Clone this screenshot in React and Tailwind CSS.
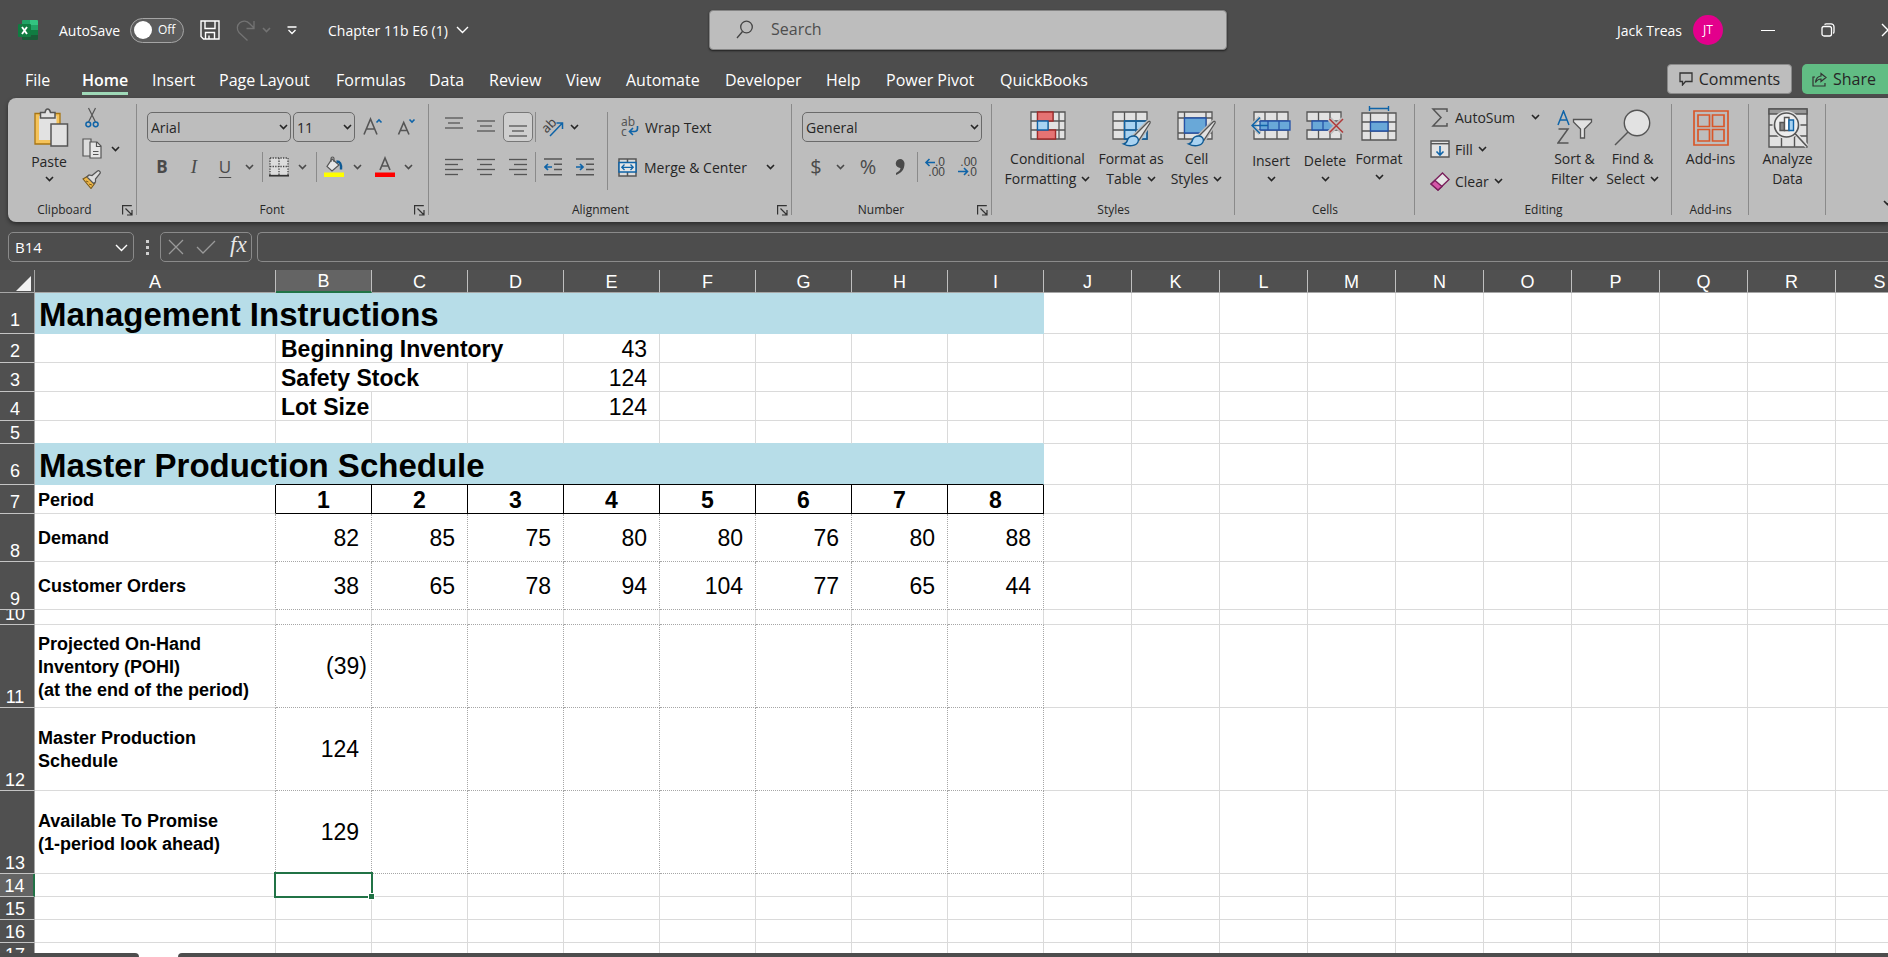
import React from "react";
import clsx from "clsx";

const tabs = [
  { name: "File", width: "w-[57px]" },
  { name: "Home", width: "w-[70px]", active: true },
  { name: "Insert", width: "w-[67px]" },
  { name: "Page Layout", width: "w-[117px]" },
  { name: "Formulas", width: "w-[93px]" },
  { name: "Data", width: "w-[60px]" },
  { name: "Review", width: "w-[77px]" },
  { name: "View", width: "w-[60px]" },
  { name: "Automate", width: "w-[99px]" },
  { name: "Developer", width: "w-[101px]" },
  { name: "Help", width: "w-[60px]" },
  { name: "Power Pivot", width: "w-[114px]" },
  { name: "QuickBooks", width: "w-[100px]" },
];

const columns = "ABCDEFGHIJKLMNOPQRS".split("").map((name, i) => ({
  name,
  width: i === 0 ? 241 : i < 9 ? 96 : 88,
}));

const rows = [
  { height: 41, title: "Management Instructions" },
  { height: 29, param: "Beginning Inventory", span: 3, value: "43" },
  { height: 29, param: "Safety Stock", span: 2, value: "124" },
  { height: 29, param: "Lot Size", span: 1, value: "124" },
  { height: 23, aboveTitle: true },
  { height: 41, title: "Master Production Schedule", underline: true },
  { height: 29, label: ["Period"], periods: ["1", "2", "3", "4", "5", "6", "7", "8"] },
  { height: 48, label: ["Demand"], dotted: true, values: ["82", "85", "75", "80", "80", "76", "80", "88"] },
  { height: 48, label: ["Customer Orders"], dotted: true, values: ["38", "65", "78", "94", "104", "77", "65", "44"] },
  { height: 15, dottedBottom: true },
  {
    height: 83,
    label: ["Projected On-Hand", "Inventory (POHI)", "(at the end of the period)"],
    dotted: true,
    values: ["(39)"],
  },
  { height: 83, label: ["Master Production", "Schedule"], dotted: true, values: ["124"] },
  { height: 83, label: ["Available To Promise", "(1-period look ahead)"], dotted: true, values: ["129"] },
  { height: 23, selected: true },
  { height: 23 },
  { height: 23 },
  { height: 23 },
];

/* ---------- small pieces ---------- */

const Chevron = ({ className = "" }) => (
  <svg width="9" height="6" viewBox="0 0 9 6" fill="none" stroke="currentColor" strokeWidth="1.6" className={clsx("shrink-0", className)}>
    <path d="M1 1l3.5 3.5L8 1" />
  </svg>
);

const WideChevron = ({ className = "" }) => (
  <svg width="13" height="8" viewBox="0 0 13 8" fill="none" stroke="currentColor" strokeWidth="1.4" className={clsx("shrink-0", className)}>
    <path d="M1 1l5.5 5.5L12 1" />
  </svg>
);

const MenuButton = ({ label, className = "" }) => (
  <button type="button" aria-label={label} className={clsx("flex h-[30px] items-center justify-center", className)}>
    <Chevron />
  </button>
);

const IconButton = ({ label, className = "w-8", children }) => (
  <button type="button" aria-label={label} className={clsx("flex h-[30px] shrink-0 items-center justify-center", className)}>
    {children}
  </button>
);

const Divider = () => <div className="h-[30px] w-px shrink-0 bg-[#8a8a8a]" />;

const Picker = ({ label, options, className = "" }) => (
  <div className={clsx("relative h-[30px]", className)}>
    <select
      aria-label={label}
      className="h-full w-full appearance-none rounded-[5px] border border-[#6a6a6a] bg-transparent pl-[3px] text-[14px] text-[#262626] outline-none"
    >
      {options.map((option) => (
        <option key={option}>{option}</option>
      ))}
    </select>
    <Chevron className="pointer-events-none absolute top-3 right-[3px]" />
  </div>
);

const Group = ({ name, launcher, className = "", children }) => (
  <section className={clsx("relative flex h-[124px] shrink-0 flex-col", className)}>
    <div className="h-[102px]">{children}</div>
    <div className="flex h-5 items-center justify-center text-[12px]">{name}</div>
    {launcher && (
      <button type="button" aria-label={`${name} settings`} className="absolute right-[4px] bottom-[6px]">
        <svg width="11" height="11" viewBox="0 0 11 11" fill="none" stroke="#333" strokeWidth="1.2">
          <path d="M.6 9.5V.6h9.2M3.5 3.5l6 6M10 5v5H5" />
        </svg>
      </button>
    )}
    <div className="absolute top-[6px] right-0 h-[111px] w-px bg-[#8a8a8a]" />
  </section>
);

const BigButton = ({ lines, icon, menu, low, className = "" }) => (
  <button type="button" className={clsx("flex shrink-0 flex-col items-center pt-[8px] text-[14px] leading-5", className)}>
    <span className="flex h-[43px] items-center justify-center">{icon}</span>
    <span className={clsx("whitespace-nowrap", low && "pt-[2px]")}>{lines[0]}</span>
    <span className={clsx("flex h-5 gap-[5px] whitespace-nowrap", lines[1] ? "items-center" : "pt-[5px]")}>
      {lines[1]}
      {menu && <Chevron />}
    </span>
  </button>
);

/* ---------- icons ---------- */

const ExcelLogo = () => (
  <svg width="20" height="20" viewBox="0 0 20 20">
    <path d="M4 1a1 1 0 011-1h7v5H4z" fill="#21a366" />
    <path d="M12 0h7a1 1 0 011 1v4h-8z" fill="#33c481" />
    <path d="M4 5h8v5H4z" fill="#107c41" />
    <path d="M12 5h8v5h-8z" fill="#21a366" />
    <path d="M4 10h8v5H4z" fill="#185c37" />
    <path d="M12 10h8v5h-8z" fill="#107c41" />
    <path d="M4 15h16v4a1 1 0 01-1 1H5a1 1 0 01-1-1z" fill="#185c37" />
    <rect y="4" width="13" height="13" rx="1" fill="#107c41" />
    <path d="M4 7l5 7M9 7l-5 7" stroke="#fff" strokeWidth="1.9" />
  </svg>
);

const SaveIcon = () => (
  <svg width="20" height="20" viewBox="0 0 20 20" fill="none" stroke="#fff" strokeWidth="1.4">
    <path d="M1 1h18v18H3.5L1 16.5z" />
    <path d="M5 1v7.5h10V1M5.5 19v-6.5h9V19M9 15.5V19" />
  </svg>
);

const RedoIcon = () => (
  <svg width="20" height="21" viewBox="0 0 20 21" fill="none" stroke="#737373" strokeWidth="1.3">
    <path d="M18 1v7.5h-7.500M18 8L13.500 3.500A6.500 6.500 0 003 12.500l8.500 8" />
  </svg>
);

const PasteIcon = () => (
  <svg width="36" height="40" viewBox="0 0 36 40" className="ml-[3px]">
    <path d="M2 5.500h25V36H2z" fill="#f5c35a" stroke="#a87512" strokeWidth="1.3" />
    <path d="M6 8h17.500v24H6z" fill="#e2e2e2" />
    <path d="M7.500 10V4.500h4.500C12.500 2 13 1 14.500 1S17 2 17.500 4.500H22V10z" fill="#e2e2e2" stroke="#555" strokeWidth="1.5" />
    <path d="M18 16h16.500v22H18z" fill="#e2e2e2" stroke="#555" strokeWidth="1.5" />
  </svg>
);

const CutIcon = () => (
  <svg width="14" height="21" viewBox="0 0 14 21" fill="none">
    <path d="M3.500 1l7 14M10.500 1l-7 14" stroke="#555" strokeWidth="1.2" />
    <circle cx="3.300" cy="17.300" r="2.400" stroke="#0f64a8" strokeWidth="1.5" />
    <circle cx="10.700" cy="17.300" r="2.400" stroke="#0f64a8" strokeWidth="1.5" />
  </svg>
);

const CopyIcon = () => (
  <svg width="20" height="21" viewBox="0 0 20 21" fill="none" stroke="#555" strokeWidth="1.2">
    <path d="M1 1h8v17H1z" fill="#dcdcdc" />
    <path d="M8 4h7l4 4v12H8z" fill="#e6e6e6" />
    <path d="M14.500 4v4.500H19M11 13.500h5.500M11 16.500h5.500" />
  </svg>
);

const BrushIcon = () => (
  <svg width="20" height="19" viewBox="0 0 20 19">
    <path d="M1 9l5-3 7 7-4 5.500z" fill="#f0b94a" stroke="#7a5a1a" strokeWidth="1.1" />
    <path d="M5 7l2-2 3 .5L15.500 1c1.500-1 3.500 1 2.500 2.500L13.500 9v3l-2 1.500z" fill="#dcdcdc" stroke="#555" strokeWidth="1.2" />
    <path d="M4 11l2.500 1M7 14l3 1" stroke="#7a5a1a" />
  </svg>
);

const FontSizeIcon = ({ up }) => (
  <svg width="20" height="20" viewBox="0 0 20 20" fill="none">
    {up ? (
      <>
        <path d="M1 17.500L7.500 2l6.500 15.500M3.300 12h8.400" stroke="#555" strokeWidth="1.6" />
        <path d="M13.500 5.500L16 3l2.500 2.500" stroke="#0f64a8" strokeWidth="1.6" />
      </>
    ) : (
      <>
        <path d="M1.500 17.500L6.700 5.500 12 17.500M3.400 13.500h6.600" stroke="#555" strokeWidth="1.6" />
        <path d="M12.500 2.500L15 5l2.500-2.500" stroke="#0f64a8" strokeWidth="1.6" />
      </>
    )}
  </svg>
);

const BordersIcon = () => (
  <svg width="20" height="20" viewBox="0 0 20 20" fill="none">
    <path d="M1 1h18v17H1z" fill="#dcdcdc" />
    <path d="M1 1h18M1 9.500h18M1 1v17M10 1v17M19 1v17" stroke="#444" strokeWidth="1.3" strokeDasharray="1.300 1.300" />
    <path d="M0 18.700h20" stroke="#333" strokeWidth="1.7" />
  </svg>
);

const FillColorIcon = () => (
  <svg width="20" height="22" viewBox="0 0 20 22">
    <path d="M8 3l7 6-7 6-5-4.500z" fill="#e6e6e6" stroke="#555" strokeWidth="1.2" />
    <path d="M7 6V2.500C7 .5 10 .5 10 2.500V6" fill="none" stroke="#555" strokeWidth="1.100" />
    <path d="M12.500 5.500c3.500 0 5 2 4.500 8" fill="none" stroke="#0f5a94" strokeWidth="2.400" />
    <path d="M0 16.500h20v4.500H0z" fill="#ffff00" />
  </svg>
);

const FontColorIcon = () => (
  <svg width="20" height="22" viewBox="0 0 20 22">
    <path d="M5 14L10 2l5 12M6.700 10h6.600" fill="none" stroke="#555" strokeWidth="1.6" />
    <path d="M0 16.500h20v4.500H0z" fill="#ff0000" />
  </svg>
);

// each entry is [inset, y]
const LinesIcon = ({ lines, align = "center" }) => (
  <svg width="18" height="20" viewBox="0 0 18 20" stroke="#555" strokeWidth="1.3">
    {lines.map(([inset, y]) => (
      <path key={y} d={`M${align === "left" ? 0 : inset} ${y}H${align === "right" ? 18 : 18 - inset}`} />
    ))}
  </svg>
);

const paragraph = [[0, 2.5], [3, 7.5], [0, 12.5], [3, 17.5]];
const paragraphSide = [[0, 2.5], [5, 7.5], [0, 12.5], [5, 17.5]];

const OrientationIcon = () => (
  <svg width="21" height="20" viewBox="0 0 21 20" fill="none" className="overflow-visible">
    <text x="2" y="15" transform="rotate(-45 5 14)" fontSize="13" fill="#444" className="font-['Noto_Sans',sans-serif]">
      ab
    </text>
    <path d="M7 19L19 6.500M13.500 6H19.500v6" stroke="#0f64a8" strokeWidth="1.5" />
  </svg>
);

const IndentIcon = ({ out }) => (
  <svg width="18" height="18" viewBox="0 0 18 18" fill="none" strokeWidth="1.4">
    <path d="M0 1h18M10 6.300h8M10 11.500h8M0 16.700h18" stroke="#555" />
    <path d={out ? "M8 9H1M4 6L1 9l3 3" : "M0 9h7M4 6l3 3-3 3"} stroke="#0f64a8" strokeWidth="1.7" />
  </svg>
);

const WrapIcon = () => (
  <svg width="18" height="20" viewBox="0 0 18 20" fill="none" className="overflow-visible">
    <text x="0" y="9" fontSize="12" fill="#555" className="font-['Noto_Sans',sans-serif]">ab</text>
    <text x="0" y="19" fontSize="12" fill="#555" className="font-['Noto_Sans',sans-serif]">c</text>
    <path d="M16.500 9v2.500a3 3 0 01-3 3H8.500M12 11l-3.500 3.500L12 18" stroke="#0f64a8" strokeWidth="1.6" />
  </svg>
);

const MergeIcon = () => (
  <svg width="19" height="19" viewBox="0 0 19 19" fill="none">
    <path d="M1 1h17v17H1zM9.500 1v17" fill="#dcdcdc" stroke="#555" strokeWidth="1.5" />
    <path d="M1 4.500h17v9.500H1z" fill="#e6e6e6" stroke="#0f64a8" strokeWidth="1.5" />
    <path d="M4 9.300h11M6.500 6.500L3.800 9.300l2.700 2.700M12.500 6.500l2.700 2.800-2.700 2.700" stroke="#0f64a8" strokeWidth="1.3" />
  </svg>
);

const DecimalIcon = ({ increase }) => (
  <svg width="20" height="20" viewBox="0 0 20 20" fill="none" className="overflow-visible">
    <text x={increase ? 20 : 19} y="8.500" fontSize="12" textAnchor="end" fill="#444" className="font-['Liberation_Sans',sans-serif]">
      {increase ? ".0" : ".00"}
    </text>
    <text x={increase ? 20 : 19} y="19" fontSize="12" textAnchor="end" fill="#444" className="font-['Liberation_Sans',sans-serif]">
      {increase ? ".00" : ".0"}
    </text>
    <path
      d={increase ? "M10 5.500H1M4.500 2L1 5.500 4.500 9" : "M0 14.500h9.500M6 11l3.500 3.500L6 18"}
      stroke="#0f64a8"
      strokeWidth="1.6"
    />
  </svg>
);

const ConditionalIcon = () => (
  <svg width="36" height="29" viewBox="0 0 36 29" fill="none" stroke="#555" strokeWidth="1.300">
    <path d="M1 1h34v27H1z" fill="#e2e2e2" />
    <path d="M1 10h34M1 19h34M7.500 1v27M29 1v27" />
    <path d="M23 1v9M18 10v9M25.500 19v9" />
    <path d="M7.500 1H23v9H7.500zM7.500 19h18v9h-18z" fill="#e57373" stroke="#a02b2b" />
    <path d="M7.500 10H18v9H7.500z" fill="#a9d3f2" stroke="#0f64a8" />
  </svg>
);

const Paintbrush = () => (
  <>
    <path d="M36 11c1-1.300 2.500-.5 2 1L27 29l-5-4z" fill="#e2e2e2" stroke="#bdbdbd" strokeWidth="4" />
    <path d="M36 11c1-1.300 2.500-.5 2 1L27 29l-5-4z" fill="#e2e2e2" stroke="#555" strokeWidth="1.300" />
    <path d="M22 25c3 0 5.500 3 4 6-2 4-9 5-14.500 2 3-.5 3.500-2 4-4 .7-2.500 3-4 6.500-4z" fill="#a9d3f2" stroke="#0f5a94" strokeWidth="1.400" />
  </>
);

const FormatTableIcon = () => (
  <svg width="39" height="36" viewBox="0 0 39 36" fill="none" stroke="#555" strokeWidth="1.300">
    <path d="M1 1h34v27H1z" fill="#e2e2e2" />
    <path d="M12.500 10H35v18H12.500z" fill="#a9d3f2" />
    <path d="M1 10h34M1 19h34M12.500 1v27M24 1v27" />
    <path d="M12.500 10H35v18H12.500zM12.500 19H35M24 10v18" stroke="#0f64a8" />
    <Paintbrush />
  </svg>
);

const CellStylesIcon = () => (
  <svg width="39" height="36" viewBox="0 0 39 36" fill="none" stroke="#555" strokeWidth="1.300">
    <path d="M1 1h34v27H1z" fill="#e2e2e2" />
    <path d="M1 7h34M1 22h34M7.500 1v27M29 1v27" />
    <path d="M7.500 7H29v15H7.500z" fill="#69a8d8" stroke="#2452a8" />
    <Paintbrush />
  </svg>
);

const InsertIcon = () => (
  <svg width="40" height="29" viewBox="0 0 40 29" fill="none" stroke="#555" strokeWidth="1.300">
    <path d="M3 1h34v27H3z" fill="#e2e2e2" />
    <path d="M14 1v27M26 1v27M3 10h34M3 19h34" />
    <path d="M9 10h30v9H9z" fill="#69a8d8" stroke="#2452a8" />
    <path d="M17 10v9M28 10v9" stroke="#2452a8" />
    <path d="M9 6.500l-8 8 8 8" stroke="#bdbdbd" strokeWidth="4" />
    <path d="M17 14.500H1.500M9 6.500l-8 8 8 8" stroke="#0f64a8" strokeWidth="1.500" />
  </svg>
);

const DeleteIcon = () => (
  <svg width="38" height="29" viewBox="0 0 38 29" fill="none" stroke="#555" strokeWidth="1.300">
    <path d="M1 1h34v9H1zM1 19h34v9H1z" fill="#e2e2e2" />
    <path d="M12.500 1v9M24 1v9M12.500 19v9M24 19v9" />
    <path d="M6 10h18l4 4.500-4 4.500H6z" fill="#69a8d8" stroke="#2452a8" />
    <path d="M17 10v9" stroke="#2452a8" />
    <path d="M23.500 8l13.500 13.500M37 8L23.500 21.500" stroke="#bdbdbd" strokeWidth="5" />
    <path d="M23.500 8l13.500 13.500M37 8L23.500 21.500" stroke="#b03a3a" strokeWidth="1.500" />
  </svg>
);

const FormatIcon = () => (
  <svg width="36" height="35" viewBox="0 0 36 35" fill="none" stroke="#555" strokeWidth="1.300">
    <path d="M1 7h34v27H1z" fill="#e2e2e2" />
    <path d="M9.500 7v27M27 7v27M1 16h34M1 25h34" />
    <path d="M9.500 16H27v9H9.500z" fill="#69a8d8" stroke="#2452a8" />
    <path d="M8.500 2.500h19M8.500 0v5M27.500 0v5" stroke="#0f64a8" strokeWidth="1.400" />
  </svg>
);

const SigmaIcon = () => (
  <svg width="20" height="19" viewBox="0 0 20 19" fill="none" stroke="#555" strokeWidth="1.500">
    <path d="M17 4V1H3l8 8.500L3 18h14v-3" />
  </svg>
);

const FillIcon = () => (
  <svg width="20" height="18" viewBox="0 0 20 18" fill="none" stroke="#555" strokeWidth="1.400">
    <path d="M1 1h18v16H1z" fill="#e2e2e2" />
    <path d="M1 3.700h18" />
    <path d="M10 6v9M6.500 11.500L10 15l3.500-3.500" stroke="#0f64a8" strokeWidth="1.600" />
  </svg>
);

const EraserIcon = () => (
  <svg width="20" height="19" viewBox="0 0 20 19" stroke="#7a1f5c" strokeWidth="1.400">
    <path d="M12.500 1L19 7.500 8 18 1 12z" fill="#e6e6e6" />
    <path d="M5 8.500l7 6L8 18l-7-6z" fill="#d557a8" />
  </svg>
);

const SortIcon = () => (
  <svg width="36" height="36" viewBox="0 0 36 36" fill="none" strokeWidth="1.500">
    <path d="M1 15L6.500 1 12 15M3 10h7" stroke="#0f64a8" />
    <path d="M1.500 19h9.500L1 33h10.500" stroke="#555" />
    <path d="M16.500 9.500h18v2.500l-7 7v9h-4v-9l-7-7z" fill="#e2e2e2" stroke="#555" strokeWidth="1.300" />
  </svg>
);

const FindIcon = () => (
  <svg width="37" height="37" viewBox="0 0 37 37" stroke="#555" strokeWidth="1.400">
    <circle cx="23" cy="14" r="12.700" fill="#e2e2e2" />
    <path d="M14 23L1 36" />
  </svg>
);

const AddinsIcon = () => (
  <svg width="36" height="36" viewBox="0 0 36 36" fill="none" stroke="#d8572a" strokeWidth="1.700">
    <path d="M1 1h34v34H1zM5 5h11.500v11.500H5zM19.500 5H31v11.500H19.500zM5 19.500h11.500V31H5zM19.500 19.500H31V31H19.500z" />
  </svg>
);

const AnalyzeIcon = () => (
  <svg width="40" height="40" viewBox="0 0 40 40" fill="none" stroke="#555" strokeWidth="1.400">
    <path d="M1 1h38v38H1z" fill="#e2e2e2" />
    <path d="M1 1h38v5H1z" fill="#999" />
    <path d="M1 17h38M1 28h38M13.500 28v11M26.500 28v11" />
    <circle cx="18.500" cy="17" r="14" fill="#e2e2e2" stroke="none" />
    <path d="M28 26l11 12.500" stroke="#e2e2e2" strokeWidth="4" />
    <circle cx="18.500" cy="17" r="12" fill="#ededed" strokeWidth="1.600" />
    <path d="M27 25.500l12 13" strokeWidth="1.600" />
    <path d="M12 14.500h4.500v8H12z" fill="#888" />
    <path d="M16.500 9.500H21v13h-4.500z" fill="#fff" />
    <path d="M21 12h4.500v10.500H21z" fill="#a9d3f2" stroke="#0f64a8" />
  </svg>
);

/* ---------- window chrome ---------- */

const TitleBar = () => (
  <header className="flex h-[60px] items-center text-[14px] text-white">
    <div className="flex w-[709px] shrink-0 items-center pl-[18px]">
      <ExcelLogo />
      <label htmlFor="autosave" className="box-content w-[71px] pl-[21px] whitespace-nowrap">
        AutoSave
      </label>
      <div className="relative flex h-[25px] w-[54px] items-center rounded-full border border-[#a5a5a5] bg-[#5c5c5c]">
        <input id="autosave" type="checkbox" className="absolute inset-0 h-full w-full appearance-none rounded-full" />
        <span className="ml-[3px] h-[18px] w-[18px] rounded-full bg-white" />
        <span className="ml-[6px] text-[12px]">Off</span>
      </div>
      <button type="button" aria-label="Save" className="ml-4">
        <SaveIcon />
      </button>
      <button type="button" aria-label="Redo" className="ml-4 flex items-center gap-[6px] text-[#737373]">
        <RedoIcon />
        <Chevron />
      </button>
      <button type="button" aria-label="Customize toolbar" className="ml-4">
        <svg width="10" height="9" viewBox="0 0 10 9" fill="none" stroke="#fff" strokeWidth="1.300">
          <path d="M.5 1h9M1.500 4L5 7.500 8.500 4" />
        </svg>
      </button>
      <button type="button" className="ml-[31px] flex items-center gap-2 whitespace-nowrap">
        Chapter 11b E6 (1)
        <WideChevron />
      </button>
    </div>
    <div className="relative h-10 w-[518px]">
      <input
        type="text"
        aria-label="Search"
        placeholder="Search"
        className="h-full w-full rounded-[4px] border border-[#858585] bg-[#bdbdbd] pb-[2px] pl-[61px] text-[16px] text-[#262626] shadow-[0_1px_2px_rgba(0,0,0,0.6)] outline-none placeholder:text-[#4d4d4d]"
      />
      <svg className="absolute top-[10px] left-[27px]" width="18" height="20" viewBox="0 0 18 20" fill="none" stroke="#444" strokeWidth="1.300">
        <circle cx="10.500" cy="7" r="5.800" />
        <path d="M6.500 11.500L1 18" />
      </svg>
    </div>
    <div className="ml-auto flex items-center">
      <span className="whitespace-nowrap">Jack Treas</span>
      <button type="button" className="ml-[11px] h-[30px] w-[30px] rounded-full bg-[#e3008c] text-[12px]">
        JT
      </button>
      <button type="button" aria-label="Minimize" className="ml-[38px] flex h-[30px] w-[14px] items-center">
        <span className="h-px w-full bg-white" />
      </button>
      <button type="button" aria-label="Restore" className="ml-[46px]">
        <svg width="14" height="14" viewBox="0 0 14 14" fill="none" stroke="#fff" strokeWidth="1.300">
          <rect x="1" y="3.500" width="9.500" height="9.500" rx="2" />
          <path d="M3.500 1.500a3 3 0 012-.7H10a3 3 0 013 3v4.700a3 3 0 01-.7 2" />
        </svg>
      </button>
      <button type="button" aria-label="Close" className="-mr-[7px] ml-[46px]">
        <svg width="14" height="14" viewBox="0 0 14 14" fill="none" stroke="#fff" strokeWidth="1.400">
          <path d="M1 1l12 12M13 1L1 13" />
        </svg>
      </button>
    </div>
  </header>
);

const TabBar = () => (
  <nav className="flex h-[38px] items-start pl-[25px] text-[16px] text-white">
    {tabs.map((tab) => (
      <div key={tab.name} className={clsx("shrink-0 pt-[6px]", tab.width)}>
        <a
          href="#"
          className={clsx(
            "inline-block h-[29px] leading-7 whitespace-nowrap",
            tab.active && "border-b-[3px] border-[#9fd9b8] font-semibold"
          )}
        >
          {tab.name}
        </a>
      </div>
    ))}
    <div className="ml-auto flex shrink-0 gap-[10px] pt-1 text-[#262626]">
      <button
        type="button"
        className="flex h-[30px] w-[125px] items-center justify-center gap-[6px] rounded-[4px] border border-[#8a8a8a] bg-[#bdbdbd]"
      >
        <svg width="14" height="14" viewBox="0 0 14 14" fill="none" stroke="#333" strokeWidth="1.300">
          <path d="M1 1h12v8.500H6.500L3.500 13V9.500H1z" />
        </svg>
        Comments
      </button>
      <button type="button" className="flex h-[30px] w-[86px] items-center gap-[6px] rounded-l-[5px] bg-[#61bd84] pl-[10px]">
        <svg width="15" height="15" viewBox="0 0 15 15" fill="none" stroke="#333" strokeWidth="1.200">
          <path d="M3 5H1v9h12v-3" />
          <path d="M9 1.500L14 5.500l-5 4V7C6.500 7 5 8 3.500 10.500 4 6.500 6 4.300 9 4z" />
        </svg>
        Share
      </button>
    </div>
  </nav>
);

const Ribbon = () => (
  <div className="ml-2 flex h-[124px] rounded-l-lg bg-[#bdbdbd] text-[#262626] shadow-[0_2px_4px_rgba(0,0,0,0.45)]">
    <Group name={<span className="pr-4">Clipboard</span>} launcher className="w-[129px]">
      <div className="flex">
        <button type="button" className="ml-[18px] flex w-[46px] flex-col items-center pt-[10px] text-[14px] leading-5">
          <PasteIcon />
          <span className="pt-[4px]">Paste</span>
          <Chevron className="mt-1" />
        </button>
        <div className="flex flex-col pt-[9px] pl-[10px]">
          <button type="button" aria-label="Cut" className="flex h-[31px] w-5 justify-center">
            <CutIcon />
          </button>
          <button type="button" aria-label="Copy" className="flex h-8 items-start gap-[9px]">
            <CopyIcon />
            <Chevron className="mt-2" />
          </button>
          <button type="button" aria-label="Format painter" className="w-5">
            <BrushIcon />
          </button>
        </div>
      </div>
    </Group>

    <Group name={<span className="pr-[22px]">Font</span>} launcher className="w-[292px]">
      <div className="flex gap-[2px] pt-[14px] pl-[10px]">
        <Picker label="Font" options={["Arial", "Calibri"]} className="w-[144px]" />
        <Picker label="Font size" options={["11", "12"]} className="w-[62px]" />
        <IconButton label="Increase font size" className="w-[32px]">
          <FontSizeIcon up />
        </IconButton>
        <IconButton label="Decrease font size" className="w-[32px]">
          <FontSizeIcon />
        </IconButton>
      </div>
      <div className="flex pt-[10px] pl-[9px] text-[17px] text-[#4a4a4a]">
        <IconButton label="Bold">
          <b>B</b>
        </IconButton>
        <IconButton label="Italic">
          <i className="font-['Liberation_Serif',serif] text-[19px]">I</i>
        </IconButton>
        <IconButton label="Underline" className="w-[30px]">
          <u className="underline-offset-4">U</u>
        </IconButton>
        <MenuButton label="Underline styles" className="mr-1 w-[18px]" />
        <Divider />
        <IconButton label="Borders" className="ml-[3px] w-[26px]">
          <BordersIcon />
        </IconButton>
        <MenuButton label="Border styles" className="mr-1 w-[20px]" />
        <Divider />
        <IconButton label="Fill color" className="ml-[3px] w-[28px]">
          <FillColorIcon />
        </IconButton>
        <MenuButton label="Fill colors" className="w-[19px]" />
        <IconButton label="Font color" className="ml-1 w-[28px]">
          <FontColorIcon />
        </IconButton>
        <MenuButton label="Font colors" className="w-[18px]" />
      </div>
    </Group>

    <Group name={<span className="pr-5">Alignment</span>} launcher className="w-[363px]">
      <div className="flex pt-[14px] pl-[9px]">
        <div>
          <div className="flex">
            <IconButton label="Top align">
              <LinesIcon lines={[[0, 1], [3, 6], [0, 11]]} />
            </IconButton>
            <IconButton label="Middle align">
              <LinesIcon lines={[[0, 4], [3, 9], [0, 14]]} />
            </IconButton>
            <IconButton label="Bottom align" className="mr-[2px] ml-px w-[30px] rounded-[5px] border border-[#777] bg-[#cfcfcf]">
              <LinesIcon lines={[[0, 9], [3, 14], [0, 19]]} />
            </IconButton>
            <Divider />
            <IconButton label="Orientation" className="w-[34px]">
              <OrientationIcon />
            </IconButton>
            <MenuButton label="Orientation options" className="w-2" />
          </div>
          <div className="flex pt-[10px]">
            <IconButton label="Align left">
              <LinesIcon lines={paragraphSide} align="left" />
            </IconButton>
            <IconButton label="Center">
              <LinesIcon lines={paragraph} />
            </IconButton>
            <IconButton label="Align right">
              <LinesIcon lines={paragraphSide} align="right" />
            </IconButton>
            <div className="pl-px">
              <Divider />
            </div>
            <IconButton label="Decrease indent" className="ml-px w-8">
              <IndentIcon out />
            </IconButton>
            <IconButton label="Increase indent">
              <IndentIcon />
            </IconButton>
          </div>
        </div>
        <div className="mr-[10px] ml-auto h-[78px] w-px bg-[#8a8a8a]" />
        <div className="w-[174px] text-[14px]">
          <button type="button" className="flex h-[30px] items-center gap-[6px] pl-[3px]">
            <WrapIcon />
            Wrap Text
          </button>
          <div className="flex pt-[10px]">
            <button type="button" className="flex h-[30px] w-[142px] items-center gap-[7px] whitespace-nowrap">
              <MergeIcon />
              Merge &amp; Center
            </button>
            <MenuButton label="Merge options" className="w-[20px]" />
          </div>
        </div>
      </div>
    </Group>

    <Group name={<span className="pr-[22px]">Number</span>} launcher className="w-[200px]">
      <div className="pt-[14px] pl-[10px]">
        <Picker label="Number format" options={["General", "Currency"]} className="w-[180px]" />
      </div>
      <div className="flex pt-[10px] pl-2 text-[20px] text-[#4a4a4a]">
        <IconButton label="Currency">$</IconButton>
        <MenuButton label="Currency formats" className="w-4" />
        <IconButton label="Percent" className="w-[40px]">
          %
        </IconButton>
        <IconButton label="Comma style" className="mr-[5px] w-[24px]">
          <svg width="10" height="16" viewBox="0 0 10 16" fill="#4a4a4a">
            <path d="M5 0a4.500 4.500 0 014.500 4.800C9.500 10.500 6 14.500 1 16V14c3-1.500 4.300-3 4.500-5A4.500 4.500 0 115 0z" />
          </svg>
        </IconButton>
        <Divider />
        <IconButton label="Increase decimal" className="w-[34px]">
          <DecimalIcon increase />
        </IconButton>
        <IconButton label="Decrease decimal" className="w-[31px]">
          <DecimalIcon />
        </IconButton>
      </div>
    </Group>

    <Group name="Styles" className="w-[243px]">
      <div className="flex pl-[10px]">
        <BigButton lines={["Conditional", "Formatting"]} menu icon={<div className="pb-1"><ConditionalIcon /></div>} className="w-[91px]" />
        <BigButton lines={["Format as", "Table"]} menu icon={<div className="pt-[3px]"><FormatTableIcon /></div>} className="w-[76px]" />
        <BigButton lines={["Cell", "Styles"]} menu icon={<div className="pt-[3px]"><CellStylesIcon /></div>} className="w-[55px]" />
      </div>
    </Group>

    <Group name="Cells" className="w-[180px]">
      <div className="flex pl-[9px]">
        <BigButton lines={["Insert"]} menu low icon={<div className="pb-1"><InsertIcon /></div>} className="w-[54px]" />
        <BigButton lines={["Delete"]} menu low icon={<div className="pb-1"><DeleteIcon /></div>} className="w-[54px]" />
        <BigButton lines={["Format"]} menu icon={<div className="pb-2"><FormatIcon /></div>} className="w-[54px]" />
      </div>
    </Group>

    <Group name="Editing" className="w-[257px]">
      <div className="flex">
        <div className="w-[131px] pt-[3px] pl-[15px] text-[14px]">
          <div className="flex h-8 items-center">
            <button type="button" className="flex w-[95px] items-center gap-[5px]">
              <SigmaIcon />
              AutoSum
            </button>
            <MenuButton label="AutoSum functions" className="w-[20px]" />
          </div>
          <button type="button" className="flex h-8 items-center gap-[5px]">
            <FillIcon />
            Fill
            <Chevron />
          </button>
          <button type="button" className="flex h-8 items-center gap-[5px]">
            <EraserIcon />
            Clear
            <Chevron />
          </button>
        </div>
        <BigButton lines={["Sort &", "Filter"]} menu icon={<SortIcon />} className="w-[57px]" />
        <BigButton lines={["Find &", "Select"]} menu icon={<FindIcon />} className="w-[59px]" />
      </div>
    </Group>

    <Group name="Add-ins" className="w-[77px]">
      <BigButton lines={["Add-ins"]} icon={<AddinsIcon />} className="w-full" />
    </Group>

    <Group className="w-[77px]">
      <BigButton lines={["Analyze", "Data"]} icon={<AnalyzeIcon />} className="w-full" />
    </Group>

    <button type="button" aria-label="Collapse ribbon" className="-mr-1 ml-auto self-end pb-4">
      <Chevron />
    </button>
  </div>
);

const FormulaBar = () => (
  <div className="flex h-12 items-center overflow-hidden pt-[2px] pl-2 text-white">
    <div className="relative h-[30px] w-[126px] shrink-0">
      <input
        type="text"
        aria-label="Name box"
        defaultValue="B14"
        className="h-full w-full rounded-[5px] border border-[#8a8a8a] bg-transparent pl-[6px] text-[15px] outline-none"
      />
      <WideChevron className="absolute top-3 right-[6px]" />
    </div>
    <div className="flex w-[26px] shrink-0 flex-col items-center gap-[3px]">
      <span className="h-[3px] w-[3px] bg-[#d0d0d0]" />
      <span className="h-[3px] w-[3px] bg-[#d0d0d0]" />
      <span className="h-[3px] w-[3px] bg-[#d0d0d0]" />
    </div>
    <div className="flex h-[30px] w-[92px] shrink-0 items-center rounded-[5px] border border-[#8a8a8a] pl-[7px]">
      <button type="button" aria-label="Cancel">
        <svg width="16" height="16" viewBox="0 0 16 16" stroke="#9a9a9a" strokeWidth="1.300">
          <path d="M1 1l14 14M15 1L1 15" />
        </svg>
      </button>
      <button type="button" aria-label="Enter" className="ml-3">
        <svg width="20" height="14" viewBox="0 0 20 14" fill="none" stroke="#9a9a9a" strokeWidth="1.300">
          <path d="M1 7l6 6L19 1" />
        </svg>
      </button>
      <button
        type="button"
        aria-label="Insert function"
        className="ml-[14px] pb-1 font-['Liberation_Serif',serif] text-[23px] leading-6 text-[#e8e8e8] italic"
      >
        fx
      </button>
    </div>
    <input
      type="text"
      aria-label="Formula bar"
      className="ml-[5px] h-[30px] flex-1 rounded-l-[5px] border border-r-0 border-[#8a8a8a] bg-transparent px-2 text-[14px] outline-none"
    />
  </div>
);

/* ---------- sheet ---------- */

const GRID = "border-r border-b border-[#dadada]";

const TitleCells = ({ row }) => (
  <>
    <td className="border-r border-b border-[#b7dde8] bg-[#b7dde8] p-0 pl-1 align-bottom text-[33px] leading-9 font-bold whitespace-nowrap">
      {row.title}
    </td>
    <td
      colSpan={8}
      className={clsx(
        "border-r border-b border-r-[#b7dde8] bg-[#b7dde8] p-0",
        row.underline ? "border-b-black" : "border-b-[#b7dde8]"
      )}
    />
  </>
);

const ParamCells = ({ row }) => (
  <>
    <td className={GRID} />
    <td colSpan={row.span} className={clsx(GRID, "p-0 pl-[5px] align-bottom text-[23px] leading-[26px] font-bold whitespace-nowrap")}>
      {row.param}
    </td>
    {Array.from({ length: 3 - row.span }, (_, i) => (
      <td key={i} className={GRID} />
    ))}
    <td className={clsx(GRID, "p-0 pr-3 text-right align-bottom text-[23px] leading-[26px]")}>{row.value}</td>
    {Array.from({ length: 4 }, (_, i) => (
      <td key={i} className={GRID} />
    ))}
  </>
);

const PeriodCells = ({ row }) => (
  <>
    <th scope="row" className="border-r border-b border-r-black border-b-[#dadada] p-0 pt-[2px] pl-[3px] text-left text-[18px] leading-[23px]">
      {row.label[0]}
    </th>
    {row.periods.map((period) => (
      <th key={period} scope="col" className="border-r border-b border-black p-0 align-bottom text-[23px] leading-[26px]">
        {period}
      </th>
    ))}
  </>
);

const ValueCells = ({ row }) => (
  <>
    <th
      scope="row"
      className="border-r border-b border-b-[#dadada] border-r-[#a6a6a6] p-0 pt-[2px] pl-[3px] text-left text-[18px] leading-[23px] whitespace-nowrap [border-right-style:dotted]"
    >
      {row.label.map((line) => (
        <div key={line}>{line}</div>
      ))}
    </th>
    {Array.from({ length: 8 }, (_, i) => {
      const value = row.values[i];
      return (
        <td
          key={i}
          className={clsx(
            "border-r border-b border-dotted border-[#a6a6a6] p-0 text-right text-[23px] leading-[26px]",
            value && value.startsWith("(") ? "pr-1" : "pr-3"
          )}
        >
          {value}
        </td>
      );
    })}
  </>
);

const EmptyCells = ({ row }) =>
  columns.slice(0, 9).map((column, i) => {
    const selected = row.selected && i === 1;
    const bottom = row.aboveTitle
      ? "border-b-[#b7dde8]"
      : row.dottedBottom && i > 0
        ? "border-b-[#a6a6a6] [border-bottom-style:dotted]"
        : "border-b-[#dadada]";
    return (
      <td key={column.name} className={clsx("relative border-r border-b border-r-[#dadada] p-0", bottom)}>
        {selected && (
          <div className="absolute -inset-[2px] z-10 border-2 border-[#217346]">
            <span className="absolute -right-[4px] -bottom-[4px] h-[7px] w-[7px] border border-white bg-[#217346]" />
          </div>
        )}
      </td>
    );
  });

const RowCells = ({ row }) => {
  if (row.title) return <TitleCells row={row} />;
  if (row.param) return <ParamCells row={row} />;
  if (row.periods) return <PeriodCells row={row} />;
  if (row.values) return <ValueCells row={row} />;
  return <EmptyCells row={row} />;
};

const Sheet = () => (
  <main className="min-h-0 flex-1 overflow-hidden bg-white">
    <table className="w-full table-fixed border-separate border-spacing-0 font-['Liberation_Sans',Arial,sans-serif] text-black">
      <colgroup>
        <col style={{ width: 35 }} />
        {columns.map((column) => (
          <col key={column.name} style={{ width: column.width }} />
        ))}
      </colgroup>
      <thead>
        <tr className="h-[23px] bg-[#505050] text-[18px] leading-5 text-white">
          <td className="border-r border-b border-[#a6a6a6] p-0">
            <svg width="15" height="15" viewBox="0 0 15 15" className="mt-1 ml-4">
              <path d="M15 0v15H0z" fill="#f2f2f2" />
            </svg>
          </td>
          {columns.map((column) => (
            <th
              key={column.name}
              scope="col"
              className={clsx(
                "border-r border-r-[#bfbfbf] p-0 font-normal",
                column.name === "B" ? "border-b-2 border-b-[#217346] bg-[#646464] pt-px" : "border-b border-b-[#a6a6a6] pt-[2px]"
              )}
            >
              {column.name}
            </th>
          ))}
        </tr>
      </thead>
      <tbody>
        {rows.map((row, i) => (
          <tr key={i} style={{ height: row.height }}>
            <th
              scope="row"
              className={clsx(
                "border-b border-b-[#c4c4c4] p-0 text-[18px] leading-5 font-normal text-white",
                row.selected ? "border-r-2 border-r-[#217346] bg-[#646464]" : "border-r border-r-[#a6a6a6] bg-[#505050]"
              )}
            >
              <div
                className={clsx("flex items-end justify-center overflow-hidden pr-1", row.title && "pb-[3px]", row.height === 29 && "pb-px")}
                style={{ height: row.height - 1 }}
              >
                {i + 1}
              </div>
            </th>
            <RowCells row={row} />
            {columns.slice(9).map((column) => (
              <td key={column.name} className={GRID} />
            ))}
          </tr>
        ))}
      </tbody>
    </table>
  </main>
);

const App = () => {
  return (
    <div className="flex h-screen flex-col overflow-hidden bg-[#4d4d4d] font-['Open_Sans','Noto_Sans',sans-serif]">
      <TitleBar />
      <TabBar />
      <Ribbon />
      <FormulaBar />
      <Sheet />
      <footer className="flex h-1 shrink-0 bg-white">
        <div className="w-[139px] rounded-tr-[4px] bg-[#4d4d4d]" />
        <div className="ml-[39px] flex-1 rounded-tl-[4px] bg-[#4d4d4d]" />
      </footer>
    </div>
  );
};

export default App;
